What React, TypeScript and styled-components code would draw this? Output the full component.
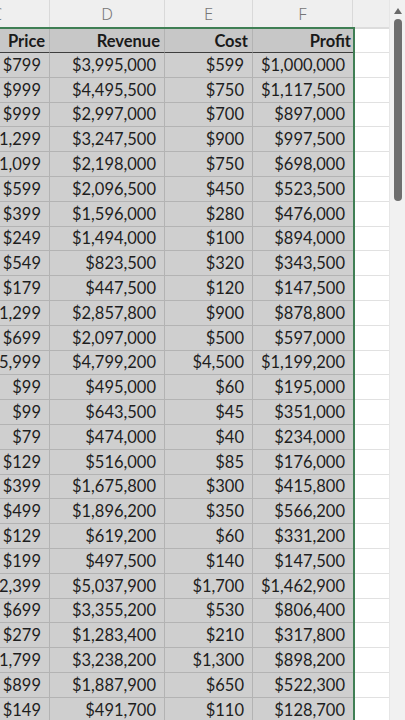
import styled, { createGlobalStyle } from 'styled-components';

// data rows: price, revenue, cost, profit
const rows: [string, string, string, string][] = [
    ['$799', '$3,995,000', '$599', '$1,000,000'],
    ['$999', '$4,495,500', '$750', '$1,117,500'],
    ['$999', '$2,997,000', '$700', '$897,000'],
    ['$1,299', '$3,247,500', '$900', '$997,500'],
    ['$1,099', '$2,198,000', '$750', '$698,000'],
    ['$599', '$2,096,500', '$450', '$523,500'],
    ['$399', '$1,596,000', '$280', '$476,000'],
    ['$249', '$1,494,000', '$100', '$894,000'],
    ['$549', '$823,500', '$320', '$343,500'],
    ['$179', '$447,500', '$120', '$147,500'],
    ['$1,299', '$2,857,800', '$900', '$878,800'],
    ['$699', '$2,097,000', '$500', '$597,000'],
    ['$5,999', '$4,799,200', '$4,500', '$1,199,200'],
    ['$99', '$495,000', '$60', '$195,000'],
    ['$99', '$643,500', '$45', '$351,000'],
    ['$79', '$474,000', '$40', '$234,000'],
    ['$129', '$516,000', '$85', '$176,000'],
    ['$399', '$1,675,800', '$300', '$415,800'],
    ['$499', '$1,896,200', '$350', '$566,200'],
    ['$129', '$619,200', '$60', '$331,200'],
    ['$199', '$497,500', '$140', '$147,500'],
    ['$2,399', '$5,037,900', '$1,700', '$1,462,900'],
    ['$699', '$3,355,200', '$530', '$806,400'],
    ['$279', '$1,283,400', '$210', '$317,800'],
    ['$1,799', '$3,238,200', '$1,300', '$898,200'],
    ['$899', '$1,887,900', '$650', '$522,300'],
    ['$149', '$491,700', '$110', '$128,700'],
];

const headers = ['Price', 'Revenue', 'Cost', 'Profit'];
const letters = ['C', 'D', 'E', 'F'];

const App = () => {
    return (
        <>
            <GlobalStyle />
            <Screen>
                <Sheet>
                    <ColumnHeaderRow>
                        {letters.map((l, i) => (
                            <ColLetter key={l} $partial={i === 0}>
                                <span>{l}</span>
                            </ColLetter>
                        ))}
                        <ColLetter $partial={false} />
                    </ColumnHeaderRow>
                    <Body>
                        <Selection>
                            {headers.map((h, i) => (
                                <HeaderCell key={h} $last={i === 3}>
                                    {h}
                                </HeaderCell>
                            ))}
                            {rows.map((r, ri) =>
                                r.map((v, ci) => (
                                    <DataCell key={`${ri}-${ci}`} $last={ci === 3}>
                                        <span>{v}</span>
                                    </DataCell>
                                ))
                            )}
                        </Selection>
                        <EmptyColumn>
                            <BlankCell $header />
                            {rows.map((_, i) => (
                                <BlankCell key={i} $header={false} />
                            ))}
                        </EmptyColumn>
                    </Body>
                </Sheet>
                <Scrollbar>
                    <svg width="8" height="6" viewBox="0 0 8 6">
                        <polygon points="4,0 8,6 0,6" fill="#6a6a6a" />
                    </svg>
                    <Thumb />
                </Scrollbar>
            </Screen>
        </>
    );
};

export default App;

const GlobalStyle = createGlobalStyle`
    * {
        box-sizing: border-box;
    }
    html, body {
        margin: 0;
        padding: 0;
        background: #ffffff;
        overflow: hidden;
    }
`;

const Screen = styled.div`
    display: flex;
    width: 405px;
    height: 720px;
    overflow: hidden;
    font-family: Lato, 'Liberation Sans', sans-serif;
`;

const Sheet = styled.div`
    flex: 1;
    display: flex;
    flex-direction: column;
    overflow: hidden;
`;

const ColumnHeaderRow = styled.div`
    display: grid;
    grid-template-columns: 50px 115px 88px 100px 1fr;
    height: 27px;
    flex: none;
    background: #efefef;
`;

const ColLetter = styled.div<{ $partial: boolean }>`
    display: flex;
    justify-content: ${(p) => (p.$partial ? 'flex-end' : 'center')};
    align-items: center;
    overflow: hidden;
    border-right: 1px solid #d9d9d9;
    color: #767676;
    font-family: 'Noto Sans', sans-serif;
    font-weight: 300;
    font-size: 16.5px;

    span {
        flex: none;
        width: ${(p) => (p.$partial ? '104px' : 'auto')};
        text-align: center;
    }

    &:last-child {
        border-right: none;
    }
`;

const Body = styled.div`
    display: flex;
    flex: 1;
`;

const Selection = styled.div`
    flex: none;
    display: grid;
    grid-template-columns: 50px 115px 88px 100px;
    grid-auto-rows: 24.8px;
    grid-template-rows: 24px;
    align-content: start;
    border-top: 2px solid #3f7f54;
    border-right: 2px solid #3f7f54;
    background: #cfcfcf;
`;

const HeaderCell = styled.div<{ $last: boolean }>`
    display: flex;
    justify-content: flex-end;
    align-items: center;
    padding-right: ${(p) => (p.$last ? '2px' : '4px')};
    background: #c7c7c7;
    border-right: ${(p) => (p.$last ? 'none' : '1px solid #b3b3b3')};
    border-bottom: 1.5px solid #3e3e3e;
    font-weight: 700;
    font-size: 16.5px;
    color: #1a1a1a;
    white-space: nowrap;
    overflow: hidden;
`;

const DataCell = styled.div<{ $last: boolean }>`
    display: flex;
    justify-content: flex-end;
    align-items: center;
    padding-right: 8px;
    border-right: ${(p) => (p.$last ? 'none' : '1px solid #b3b3b3')};
    border-bottom: 1px solid #b3b3b3;
    font-size: 16.5px;
    color: #1e1e1e;
    white-space: nowrap;
    overflow: hidden;

    span {
        flex: none;
    }
`;

const EmptyColumn = styled.div`
    flex: 1;
    display: flex;
    flex-direction: column;
    border-top: 2px solid #dcdcdc;
`;

const BlankCell = styled.div<{ $header: boolean }>`
    flex: none;
    height: ${(p) => (p.$header ? '24px' : '24.8px')};
    border-bottom: 1px solid #e1e1e1;
`;

const Scrollbar = styled.div`
    flex: none;
    width: 16px;
    display: flex;
    flex-direction: column;
    align-items: center;
    padding-top: 8px;
    background: #f1f1f1;
    border-left: 1px solid #e6e6e6;
`;

const Thumb = styled.div`
    width: 8px;
    height: 182px;
    margin-top: 5px;
    border-radius: 4px;
    background: #6e6e6e;
`;
